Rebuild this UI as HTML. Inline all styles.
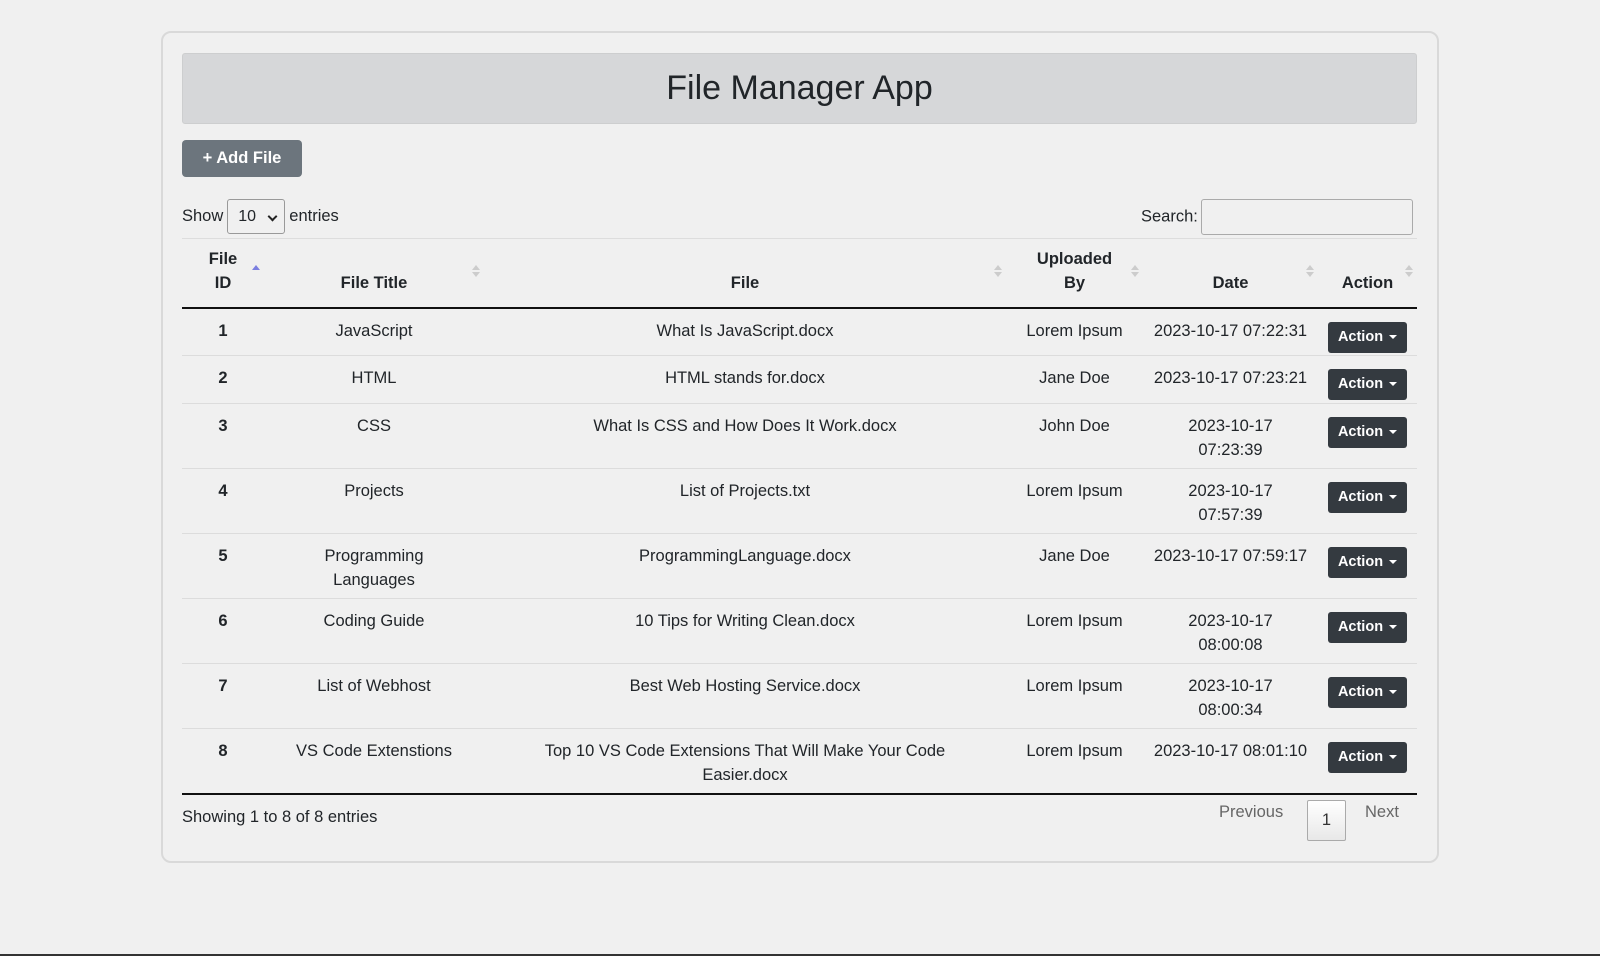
<!DOCTYPE html>
<html><head><meta charset="utf-8"><style>
*{box-sizing:border-box}
body{margin:0;width:1600px;height:956px;background:#f0f0f0;font-family:"Liberation Sans",sans-serif;color:#212529;position:relative;overflow:hidden;font-size:16.5px}
.card{position:absolute;left:161px;top:31px;width:1278px;height:832px;border:2px solid #d9d9d9;border-radius:10px;background:#f0f0f0}
.hdr{position:absolute;left:182px;top:53px;width:1235px;height:71px;background:#d6d7d9;border:1px solid #cdcecf;border-radius:3px;text-align:center;line-height:68px;font-size:34px;color:#212529}
.add{position:absolute;left:182px;top:140px;width:120px;height:37px;background:#6c757d;color:#fff;border-radius:4px;font-weight:bold;font-size:16.5px;line-height:37px;text-align:center}
.show{position:absolute;left:182px;top:199px;font-size:16.5px}
.sel{display:inline-block;width:58px;height:35px;border:1px solid #999;border-radius:3px;vertical-align:middle;margin:0 4px;padding:0 10px;line-height:33px;position:relative;font-size:16px}
.sel:after{content:"";position:absolute;right:8px;top:13px;width:5px;height:5px;border-right:2px solid #222;border-bottom:2px solid #222;transform:rotate(45deg)}
.search{position:absolute;left:1141px;top:199px;font-size:16.5px}
.search span{display:inline-block;width:212px;height:36px;border:1px solid #aaa;border-radius:3px;vertical-align:middle;margin-left:3px}
table{position:absolute;left:182px;top:238px;width:1235px;border-collapse:collapse;table-layout:fixed;border-top:1px solid #ddd}
th{font-weight:bold;height:69px;vertical-align:bottom;padding:0 0 12px;border-bottom:2px solid #111;position:relative;line-height:24px;text-align:center}
th i{position:absolute;right:8px;top:26px;width:0;height:0}
th i:before{content:"";position:absolute;left:-4px;top:0;border:4px solid transparent;border-bottom:5px solid #ccc;border-top:0}
th i:after{content:"";position:absolute;left:-4px;top:7px;border:4px solid transparent;border-top:5px solid #ccc;border-bottom:0}
th i.up:before{border-bottom-color:#7b7fe0}th i.up:after{display:none}
td{text-align:center;vertical-align:top;padding:10px 6px 0;line-height:24px;border-bottom:1px solid #dcdcdc;white-space:nowrap}
tr.r1 td{height:48px}tr.r2 td{height:65px}
tbody tr:last-child td{border-bottom:2px solid #111}
td.id{font-weight:bold}
.btn{display:inline-block;background:#343a40;color:#fff;font-weight:bold;font-size:14.5px;border-radius:3px;width:79px;height:31px;line-height:31px;margin-top:3px}
.btn:after{content:"";display:inline-block;margin-left:6px;vertical-align:middle;border:4px solid transparent;border-top:4px solid #fff;border-bottom:0}
.foot{position:absolute;left:182px;top:808px;font-size:16.5px}
.pg{position:absolute;top:803px;font-size:16.5px;color:#666}
.pbox{position:absolute;left:1307px;top:800px;width:39px;height:41px;border:1px solid #aaa;border-radius:2px;background:linear-gradient(#fff,#e8e8e8);text-align:center;line-height:39px;color:#333}
.bar{position:absolute;left:0;top:954px;width:1600px;height:2px;background:#333}
</style></head><body>
<div class="card"></div>
<div class="hdr">File Manager App</div>
<div class="add">+ Add File</div>
<div class="show">Show<span class="sel">10</span>entries</div>
<div class="search">Search:<span></span></div>
<table>
<colgroup><col style="width:82px"><col style="width:220px"><col style="width:522px"><col style="width:137px"><col style="width:175px"><col style="width:99px"></colgroup>
<thead><tr><th>File<br>ID<i class="up"></i></th><th>File Title<i></i></th><th>File<i></i></th><th>Uploaded<br>By<i></i></th><th>Date<i></i></th><th>Action<i></i></th></tr></thead>
<tbody>
<tr class="r1"><td class="id">1</td><td>JavaScript</td><td>What Is JavaScript.docx</td><td>Lorem Ipsum</td><td>2023-10-17 07:22:31</td><td><span class="btn">Action</span></td></tr>
<tr class="r1"><td class="id">2</td><td>HTML</td><td>HTML stands for.docx</td><td>Jane Doe</td><td>2023-10-17 07:23:21</td><td><span class="btn">Action</span></td></tr>
<tr class="r2"><td class="id">3</td><td>CSS</td><td>What Is CSS and How Does It Work.docx</td><td>John Doe</td><td>2023-10-17<br>07:23:39</td><td><span class="btn">Action</span></td></tr>
<tr class="r2"><td class="id">4</td><td>Projects</td><td>List of Projects.txt</td><td>Lorem Ipsum</td><td>2023-10-17<br>07:57:39</td><td><span class="btn">Action</span></td></tr>
<tr class="r2"><td class="id">5</td><td>Programming<br>Languages</td><td>ProgrammingLanguage.docx</td><td>Jane Doe</td><td>2023-10-17 07:59:17</td><td><span class="btn">Action</span></td></tr>
<tr class="r2"><td class="id">6</td><td>Coding Guide</td><td>10 Tips for Writing Clean.docx</td><td>Lorem Ipsum</td><td>2023-10-17<br>08:00:08</td><td><span class="btn">Action</span></td></tr>
<tr class="r2"><td class="id">7</td><td>List of Webhost</td><td>Best Web Hosting Service.docx</td><td>Lorem Ipsum</td><td>2023-10-17<br>08:00:34</td><td><span class="btn">Action</span></td></tr>
<tr class="r2"><td class="id">8</td><td>VS Code Extenstions</td><td>Top 10 VS Code Extensions That Will Make Your Code<br>Easier.docx</td><td>Lorem Ipsum</td><td>2023-10-17 08:01:10</td><td><span class="btn">Action</span></td></tr>
</tbody></table>
<div class="foot">Showing 1 to 8 of 8 entries</div>
<div class="pg" style="left:1219px">Previous</div>
<div class="pbox">1</div>
<div class="pg" style="left:1365px">Next</div>
<div class="bar"></div>
</body></html>
